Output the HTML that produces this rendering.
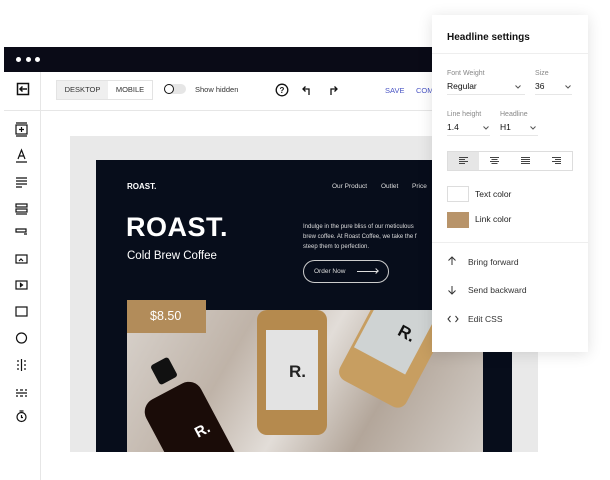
<!DOCTYPE html>
<html><head><style>
*{margin:0;padding:0;box-sizing:border-box}
html,body{overflow:hidden}
body{width:610px;height:480px;background:#fff;font-family:"Liberation Sans",sans-serif;position:relative}
.a{position:absolute}
</style></head><body>
<div class="a" style="left:4px;top:47px;width:428px;height:25px;background:#0a0b17"></div>
<div class="a" style="left:16px;top:57px;width:5px;height:5px;border-radius:50%;background:#fff"></div>
<div class="a" style="left:26px;top:57px;width:5px;height:5px;border-radius:50%;background:#fff"></div>
<div class="a" style="left:35px;top:57px;width:5px;height:5px;border-radius:50%;background:#fff"></div>
<div class="a" style="left:4px;top:110px;width:428px;height:1px;background:#e6e6e6"></div>
<div class="a" style="left:40px;top:72px;width:1px;height:408px;background:#e6e6e6"></div>
<svg class="a" style="left:16px;top:82px" width="14" height="14" viewBox="0 0 14 14" fill="none" stroke="#111" stroke-width="1.5"><rect x="1.5" y="1.5" width="11" height="11"/><path d="M11 7H4M6.5 4.5L4 7l2.5 2.5"/></svg>
<div class="a" style="left:56px;top:80px;width:97px;height:20px;border:1px solid #e3e3e3;font-size:7.5px;color:#333"><div class="a" style="left:0;top:0;width:51px;height:18px;background:#efefef;text-align:center;line-height:18px">DESKTOP</div><div class="a" style="left:51px;top:0;width:44px;height:18px;text-align:center;line-height:18px">MOBILE</div></div>
<div class="a" style="left:164px;top:84px;width:22px;height:10px;border-radius:5px;background:#e6e6e6"></div>
<div class="a" style="left:164px;top:84px;width:10px;height:10px;border-radius:50%;border:1.5px solid #111;background:#fff"></div>
<div class="a" style="left:195px;top:85px;font-size:7.5px;color:#333">Show hidden</div>
<svg class="a" style="left:275px;top:83px" width="14" height="14" viewBox="0 0 14 14" fill="none" stroke="#111" stroke-width="1.3"><circle cx="7" cy="7" r="5.8"/><text x="7" y="10" font-size="8" text-anchor="middle" fill="#111" stroke="none" font-family="Liberation Sans" font-weight="bold">?</text></svg>
<svg class="a" style="left:301px;top:84px" width="12" height="12" viewBox="0 0 12 12" fill="none" stroke="#111" stroke-width="1.3"><path d="M8 11V5H2M4.5 2.5L2 5l2.5 2.5"/></svg>
<svg class="a" style="left:327px;top:84px" width="12" height="12" viewBox="0 0 12 12" fill="none" stroke="#111" stroke-width="1.3"><path d="M4 11V5h6M7.5 2.5L10 5 7.5 7.5"/></svg>
<div class="a" style="left:385px;top:86px;font-size:7.5px;color:#4a55c4">SAVE</div>
<div class="a" style="left:416px;top:86px;font-size:7.5px;color:#4a55c4">COM</div>
<svg class="a" style="left:12px;top:120px" width="20" height="305" viewBox="0 0 20 305" fill="none" stroke="#111" stroke-width="1.2">
<rect x="4" y="5" width="11" height="9"/><path d="M4 3h11M4 16h11M9.5 7v5M7 9.5h5"/>
<path d="M6 39l3.5-9 3.5 9M7 36h5M4 42h11"/>
<path d="M4 58h11M4 61h11M4 64h11M4 67h6"/>
<rect x="4" y="84" width="11" height="3"/><rect x="4" y="89" width="11" height="3"/><path d="M4 94h11"/>
<path d="M4 109h10v3H4zM12 114h3"/>
<rect x="4" y="135" width="11" height="8"/><path d="M7 141l2-2 2 2"/>
<rect x="4" y="161" width="11" height="8"/><path d="M8.5 163.5v3l2-1.5z"/>
<rect x="4" y="187" width="11" height="9"/>
<circle cx="9.5" cy="218" r="5"/>
<path d="M9.5 239v12M6 240v2M6 244v2M6 248v2M13 240v2M13 244v2M13 248v2"/>
<path d="M4 270h2M8 270h3M13 270h2M4 273h11M4 276h2M8 276h3M13 276h2"/>
<circle cx="9.5" cy="297" r="4.5"/><path d="M7.5 291h4M9.5 295v2.5h1.5"/>
</svg>
<div class="a" style="left:70px;top:136px;width:468px;height:316px;background:#e9e9e9"></div>
<div class="a" style="left:96px;top:160px;width:416px;height:292px;background:#070d1b"></div>
<div class="a" style="left:127px;top:182px;font-size:8px;font-weight:bold;color:#fff">ROAST.</div>
<div class="a" style="left:332px;top:183px;font-size:6.5px;color:#ddd">Our Product</div>
<div class="a" style="left:381px;top:183px;font-size:6.5px;color:#ddd">Outlet</div>
<div class="a" style="left:412px;top:183px;font-size:6.5px;color:#ddd">Price</div>
<div class="a" style="left:126px;top:212px;font-size:27px;font-weight:bold;color:#fff;letter-spacing:0.5px">ROAST.</div>
<div class="a" style="left:127px;top:250px;font-size:11.5px;color:#fff">Cold Brew Coffee</div>
<div class="a" style="left:303px;top:222px;font-size:6px;line-height:10px;color:#ddd;white-space:nowrap">Indulge in the pure bliss of our meticulous<br>brew coffee. At Roast Coffee, we take the f<br>steep them to perfection.</div>
<div class="a" style="left:303px;top:260px;width:86px;height:23px;border:1px solid #ccc;border-radius:12px"></div>
<div class="a" style="left:314px;top:268px;font-size:6.5px;color:#ddd">Order Now</div>
<div class="a" style="left:357px;top:271px;width:21px;height:1px;background:#ddd"></div>
<div class="a" style="left:374px;top:269px;width:4px;height:4px;border-top:1px solid #ddd;border-right:1px solid #ddd;transform:rotate(45deg)"></div>
<div class="a" style="left:127px;top:310px;width:356px;height:142px;background:linear-gradient(120deg,#d8d2cc,#bfb3a8 30%,#e2ddd8 50%,#b3a69a 70%,#d4cec8);overflow:hidden">
 <div class="a" style="left:35px;top:75px;width:62px;height:110px;background:#1a0c08;border-radius:14px;transform:rotate(-28deg)"></div>
 <div class="a" style="left:27px;top:50px;width:20px;height:22px;background:#111;border-radius:3px;transform:rotate(-28deg)"></div>
 <div class="a" style="left:68px;top:112px;font-size:15px;font-weight:bold;color:#fff;transform:rotate(-28deg)">R.</div>
 <div class="a" style="left:130px;top:0;width:70px;height:125px;background:#b58a4e;border-radius:10px"></div>
 <div class="a" style="left:139px;top:20px;width:52px;height:80px;background:#e3e3e3"></div>
 <div class="a" style="left:162px;top:52px;font-size:17px;font-weight:bold;color:#222">R.</div>
 <div class="a" style="left:230px;top:-20px;width:75px;height:110px;background:#c79e61;border-radius:10px;transform:rotate(28deg)"></div>
 <div class="a" style="left:240px;top:-15px;width:58px;height:70px;background:#cfd3d3;transform:rotate(28deg)"></div>
 <div class="a" style="left:271px;top:14px;font-size:17px;font-weight:bold;color:#111;transform:rotate(28deg)">R.</div>
</div>
<div class="a" style="left:127px;top:300px;width:79px;height:33px;background:#b28c5a;color:#fff;font-size:12.5px;line-height:33px;padding-left:23px">$8.50</div>
<div class="a" style="left:432px;top:15px;width:156px;height:337px;background:#fff;box-shadow:0 2px 14px rgba(0,0,0,0.12)"></div>
<div class="a" style="left:447px;top:32px;font-size:10px;font-weight:bold;color:#111">Headline settings</div>
<div class="a" style="left:432px;top:53px;width:156px;height:1px;background:#eee"></div>
<div class="a" style="left:447px;top:70px;font-size:7px;color:#888">Font Weight</div>
<div class="a" style="left:447px;top:81px;font-size:8.5px;color:#111">Regular</div>
<svg class="a" style="left:515px;top:85px" width="6" height="4" fill="none" stroke="#555"><path d="M0.5 0.5l2.5 2.5 2.5-2.5"/></svg>
<div class="a" style="left:447px;top:94px;width:78px;height:1px;background:#e6e6e6"></div>
<div class="a" style="left:535px;top:70px;font-size:7px;color:#888">Size</div>
<div class="a" style="left:535px;top:81px;font-size:8.5px;color:#111">36</div>
<svg class="a" style="left:565px;top:85px" width="6" height="4" fill="none" stroke="#555"><path d="M0.5 0.5l2.5 2.5 2.5-2.5"/></svg>
<div class="a" style="left:535px;top:94px;width:37px;height:1px;background:#e6e6e6"></div>
<div class="a" style="left:447px;top:111px;font-size:7px;color:#888">Line height</div>
<div class="a" style="left:447px;top:122px;font-size:8.5px;color:#111">1.4</div>
<svg class="a" style="left:483px;top:126px" width="6" height="4" fill="none" stroke="#555"><path d="M0.5 0.5l2.5 2.5 2.5-2.5"/></svg>
<div class="a" style="left:447px;top:135px;width:43px;height:1px;background:#e6e6e6"></div>
<div class="a" style="left:500px;top:111px;font-size:7px;color:#888">Headline</div>
<div class="a" style="left:500px;top:122px;font-size:8.5px;color:#111">H1</div>
<svg class="a" style="left:530px;top:126px" width="6" height="4" fill="none" stroke="#555"><path d="M0.5 0.5l2.5 2.5 2.5-2.5"/></svg>
<div class="a" style="left:500px;top:135px;width:38px;height:1px;background:#e6e6e6"></div>
<div class="a" style="left:447px;top:151px;width:126px;height:20px;border:1px solid #ddd"></div>
<div class="a" style="left:448px;top:152px;width:31px;height:18px;background:#e6e6e6"></div>
<svg class="a" style="left:447px;top:151px" width="126" height="20" stroke="#444" stroke-width="1" fill="none">
<path d="M12 6.5h9M12 8.5h6M12 10.5h9M12 12.5h6"/>
<path d="M43 6.5h9M44.5 8.5h6M43 10.5h9M44.5 12.5h6"/>
<path d="M74 6.5h9M74 8.5h9M74 10.5h9M74 12.5h9"/>
<path d="M105 6.5h9M108 8.5h6M105 10.5h9M108 12.5h6"/>
</svg>
<div class="a" style="left:447px;top:186px;width:22px;height:16px;border:1px solid #ddd;background:#fff"></div>
<div class="a" style="left:475px;top:189px;font-size:8.5px;color:#222">Text color</div>
<div class="a" style="left:447px;top:212px;width:22px;height:16px;background:#b8946a"></div>
<div class="a" style="left:475px;top:214px;font-size:8.5px;color:#222">Link color</div>
<div class="a" style="left:432px;top:242px;width:156px;height:1px;background:#eee"></div>
<svg class="a" style="left:447px;top:256px" width="10" height="10" fill="none" stroke="#333" stroke-width="1"><path d="M5 9V1M1.5 4.5L5 1l3.5 3.5"/></svg>
<div class="a" style="left:468px;top:257px;font-size:8.5px;color:#333">Bring forward</div>
<svg class="a" style="left:447px;top:285px" width="10" height="10" fill="none" stroke="#333" stroke-width="1"><path d="M5 1v8M1.5 5.5L5 9l3.5-3.5"/></svg>
<div class="a" style="left:468px;top:285px;font-size:8.5px;color:#333">Send backward</div>
<svg class="a" style="left:447px;top:315px" width="12" height="8" fill="none" stroke="#333" stroke-width="1"><path d="M3.5 1L1 4l2.5 3M8.5 1L11 4 8.5 7"/></svg>
<div class="a" style="left:468px;top:314px;font-size:8.5px;color:#333">Edit CSS</div>
</body></html>
